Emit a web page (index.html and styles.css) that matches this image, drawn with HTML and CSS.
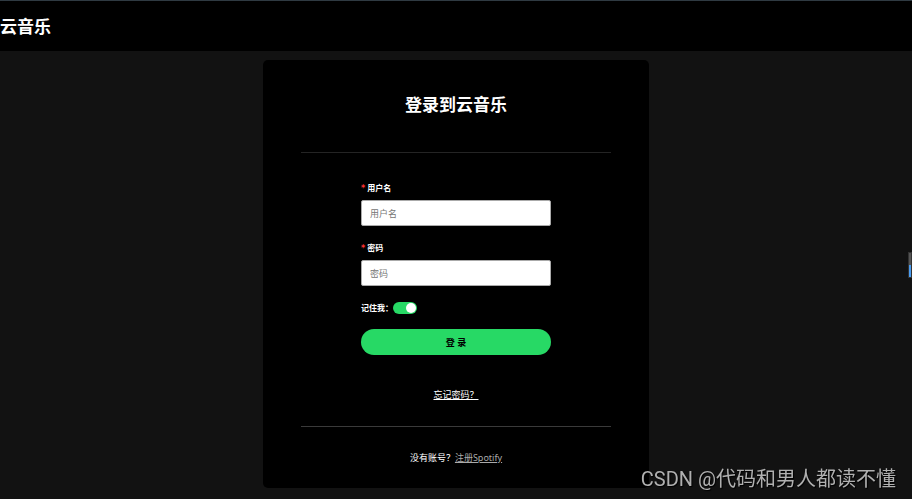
FILE: index.html
```html
<!DOCTYPE html>
<html lang="zh-CN">
<head>
  <meta charset="UTF-8">
  <meta name="viewport" content="width=device-width, initial-scale=1.0">
  <title>登录到云音乐</title>
  <link rel="stylesheet" href="styles.css">
</head>
<body>

<!-- Header -->
<header class="header">
  <span class="logo">云音乐</span>
</header>

<!-- Login card -->
<main class="login-card">
  <h1>登录到云音乐</h1>
  <hr class="divider">

  <form class="login-form">
    <div class="form-item">
      <label for="username"><span class="required">*</span> 用户名</label>
      <input type="text" id="username" name="username" placeholder="用户名">
    </div>
    <div class="form-item">
      <label for="password"><span class="required">*</span> 密码</label>
      <input type="password" id="password" name="password" placeholder="密码">
    </div>
    <div class="remember">
      <label for="remember">记住我：</label>
      <input type="checkbox" class="switch" id="remember" name="remember" checked>
    </div>
    <button type="submit" class="login-button">登 录</button>
  </form>

  <a href="#" class="forgot">忘记密码？</a>
  <hr class="divider divider-light">
  <p class="signup">没有账号？<a href="#">注册Spotify</a></p>
</main>

<div class="side-handle"></div>
<div class="watermark">CSDN @代码和男人都读不懂</div>

</body>
</html>
```

FILE: styles.css
```css
* {
  box-sizing: border-box;
}

body {
  margin: 0;
  background-color: #121212;
  color: #fff;
  font-family: "Noto Sans", "Noto Sans CJK SC", sans-serif;
  font-size: 9px;
  line-height: 12px;
}

/* Header */
.header {
  padding: 14px 0 12px;
  background-color: #000;
  border-top: 1px solid #2f3a42;
}

.logo {
  display: block;
  font-size: 17px;
  font-weight: bold;
  line-height: 24px;
}

/* Login card */
.login-card {
  display: flex;
  flex-direction: column;
  align-items: center;
  width: 100%;
  max-width: 386px;
  margin: 9px auto 11px;
  padding: 33px 38px 24px;
  background-color: #000;
  border-radius: 5px;
}

.login-card h1 {
  margin: 0;
  font-size: 17px;
  line-height: 24px;
}

.divider {
  width: 100%;
  margin: 35px 0 29px;
  border: none;
  border-top: 1px solid #242424;
}

.divider-light {
  margin: 25px 0;
  border-top-color: #3a3a3a;
}

/* Form */
.login-form {
  display: flex;
  flex-direction: column;
  width: 100%;
  max-width: 190px;
}

.form-item {
  display: flex;
  flex-direction: column;
  gap: 6px;
  margin-bottom: 16px;
}

.login-form label {
  font-size: 8px;
  font-weight: bold;
}

.required {
  color: #f33;
  font-family: "DejaVu Sans", sans-serif;
  line-height: 8px;
}

.form-item input {
  width: 100%;
  height: 26px;
  padding: 0 8px;
  border: 1px solid #aaa;
  border-radius: 2px;
  background-color: #fff;
  color: #333;
  font-family: inherit;
  font-size: 9px;
}

.form-item input::placeholder {
  color: #757575;
}

.remember {
  display: flex;
  align-items: center;
  margin-bottom: 15px;
}

.switch {
  appearance: none;
  display: flex;
  width: 24px;
  height: 12px;
  margin: 0;
  padding: 1px;
  border-radius: 6px;
  background-color: #555;
}

.switch::before {
  content: "";
  width: 10px;
  height: 10px;
  border-radius: 50%;
  background-color: #fff;
}

.switch:checked {
  justify-content: flex-end;
  background-color: #27d965;
}

.login-button {
  height: 26px;
  padding: 0;
  border: none;
  border-radius: 13px;
  background-color: #27d965;
  color: #000;
  font-family: inherit;
  font-size: 9px;
  font-weight: bold;
  cursor: pointer;
}

/* Links */
.forgot {
  margin-top: 34px;
  color: #fff;
}

.signup {
  margin: 0;
}

.signup a {
  color: #aaa;
}

/* Floating elements */
.side-handle {
  position: fixed;
  top: 252px;
  right: 0;
  width: 4px;
  height: 26px;
  border: 1px solid #333;
  background: linear-gradient(#555 50%, #4a9cf0 50%);
}

.watermark {
  position: fixed;
  right: 16px;
  bottom: 8px;
  color: #b0b0b0;
  font-family: Roboto, "Noto Sans CJK SC", sans-serif;
  font-size: 20px;
  line-height: 24px;
  text-shadow: 1px 1px 1px #000;
}
```
